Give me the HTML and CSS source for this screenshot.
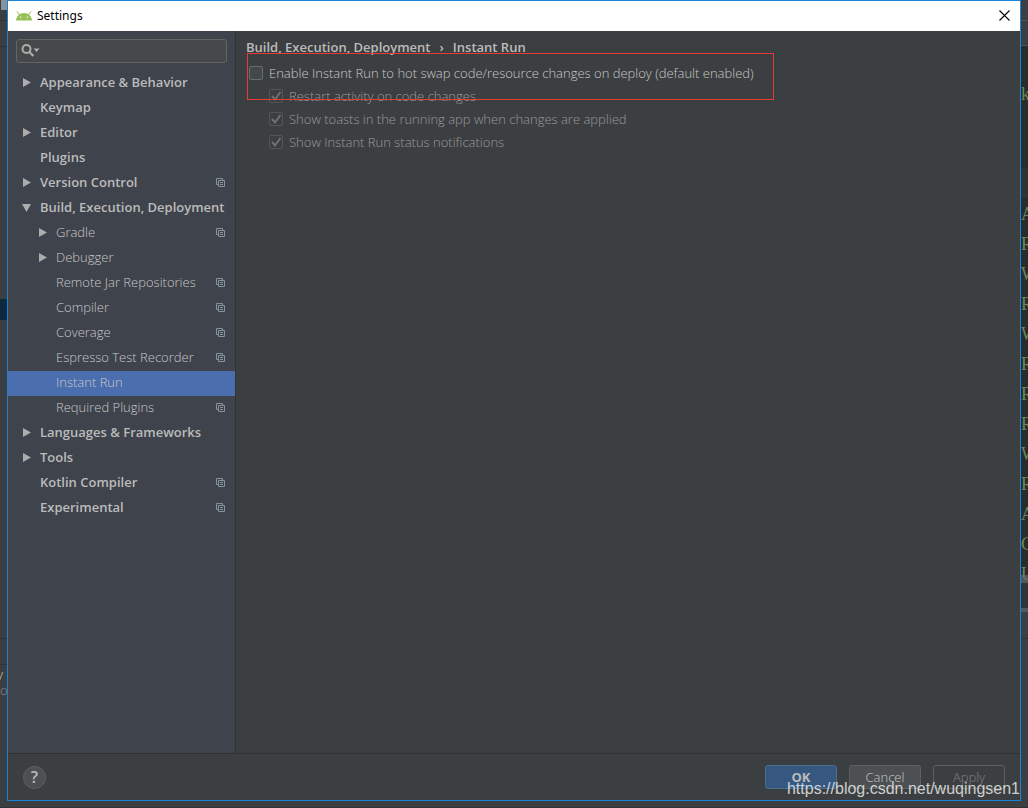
FILE: index.html
```html
<!DOCTYPE html>
<html lang="en">
<head>
  <meta charset="UTF-8" />
  <meta name="viewport" content="width=device-width, initial-scale=1.0" />
  <title>Settings</title>
  <link rel="stylesheet" href="styles.css">
</head>
<body>
  <svg class="sprite" aria-hidden="true">
    <symbol id="right" viewBox="0 0 9 9"><path d="M1 0 L9 4.5 L1 9 Z" fill="#adadad"/></symbol>
    <symbol id="down" viewBox="0 0 9 9"><path d="M0 1 H9 L4.5 9 Z" fill="#adadad"/></symbol>
    <symbol id="copy" viewBox="0 0 9 9">
      <path d="M2 6.5 H0.5 V0.5 H6.5 V2" fill="none" stroke="#87939a"/>
      <path d="M2.5 2.5 H8.5 V8.5 H2.5 Z M4 4.5 H7 M4 6.5 H7" fill="none" stroke="#87939a"/>
    </symbol>
  </svg>

  <div class="ide">
    <div class="strip left">
      <div class="tab"></div>
      <div class="toolbar"></div>
      <div class="navbar"></div>
      <div class="project"></div>
      <div class="selected"></div>
      <div class="project-rest"></div>
      <div class="status"></div>
      <div class="log"><span class="light">y</span><span>o</span></div>
    </div>

    <main class="dialog">
      <header class="titlebar">
        <svg width="16" height="10" viewBox="0 0 16 10">
          <path d="M0 9.5 C0.3 5 3.6 2 8 2 C12.4 2 15.7 5 16 9.5 Z" fill="#97c257"/>
          <path d="M1 0.4 L3.6 4 M15 0.4 L12.4 4" stroke="#97c257" stroke-width="1"/>
          <circle cx="4.5" cy="6.2" r="0.7" fill="#fff"/>
          <circle cx="11.5" cy="6.2" r="0.7" fill="#fff"/>
        </svg>
        <h1>Settings</h1>
        <button class="close" aria-label="Close">
          <svg width="11" height="11" viewBox="0 0 11 11"><path d="M0.5 0.5 L10.5 10.5 M10.5 0.5 L0.5 10.5" stroke="#000" stroke-width="1.1"/></svg>
        </button>
      </header>

      <div class="body">
        <aside class="sidebar">
          <label class="search">
            <svg width="19" height="13" viewBox="0 0 19 13">
              <circle cx="5.5" cy="5" r="4" fill="none" stroke="#adadad" stroke-width="2"/>
              <path d="M8.2 7.8 L12.4 12" stroke="#adadad" stroke-width="2.2"/>
              <path d="M12.5 4.5 H18.5 L15.5 8 Z" fill="#adadad"/>
            </svg>
            <input type="text" aria-label="Search settings">
          </label>
          <nav>
            <ul class="tree">
              <li><a href="#"><svg class="arrow"><use href="#right"/></svg><span>Appearance &amp; Behavior</span></a></li>
              <li><a href="#"><i class="arrow"></i><span>Keymap</span></a></li>
              <li><a href="#"><svg class="arrow"><use href="#right"/></svg><span>Editor</span></a></li>
              <li><a href="#"><i class="arrow"></i><span>Plugins</span></a></li>
              <li><a href="#"><svg class="arrow"><use href="#right"/></svg><span>Version Control</span><svg class="copy"><use href="#copy"/></svg></a></li>
              <li>
                <a href="#"><svg class="arrow"><use href="#down"/></svg><span>Build, Execution, Deployment</span></a>
                <ul class="sub">
                  <li><a href="#"><svg class="arrow"><use href="#right"/></svg><span>Gradle</span><svg class="copy"><use href="#copy"/></svg></a></li>
                  <li><a href="#"><svg class="arrow"><use href="#right"/></svg><span>Debugger</span></a></li>
                  <li><a href="#"><i class="arrow"></i><span>Remote Jar Repositories</span><svg class="copy"><use href="#copy"/></svg></a></li>
                  <li><a href="#"><i class="arrow"></i><span>Compiler</span><svg class="copy"><use href="#copy"/></svg></a></li>
                  <li><a href="#"><i class="arrow"></i><span>Coverage</span><svg class="copy"><use href="#copy"/></svg></a></li>
                  <li><a href="#"><i class="arrow"></i><span>Espresso Test Recorder</span><svg class="copy"><use href="#copy"/></svg></a></li>
                  <li><a href="#" class="active"><i class="arrow"></i><span>Instant Run</span></a></li>
                  <li><a href="#"><i class="arrow"></i><span>Required Plugins</span><svg class="copy"><use href="#copy"/></svg></a></li>
                </ul>
              </li>
              <li><a href="#"><svg class="arrow"><use href="#right"/></svg><span>Languages &amp; Frameworks</span></a></li>
              <li><a href="#"><svg class="arrow"><use href="#right"/></svg><span>Tools</span></a></li>
              <li><a href="#"><i class="arrow"></i><span>Kotlin Compiler</span><svg class="copy"><use href="#copy"/></svg></a></li>
              <li><a href="#"><i class="arrow"></i><span>Experimental</span><svg class="copy"><use href="#copy"/></svg></a></li>
            </ul>
          </nav>
        </aside>

        <section class="content">
          <h2><span>Build, Execution, Deployment</span><span>›</span><span>Instant Run</span></h2>
          <div class="options">
            <label class="option"><input type="checkbox"><span>Enable Instant Run to hot swap code/resource changes on deploy (default enabled)</span></label>
            <label class="option child"><input type="checkbox" checked disabled><span>Restart activity on code changes</span></label>
            <label class="option child"><input type="checkbox" checked disabled><span>Show toasts in the running app when changes are applied</span></label>
            <label class="option child"><input type="checkbox" checked disabled><span>Show Instant Run status notifications</span></label>
            <div class="marker"></div>
          </div>
        </section>
      </div>

      <footer class="footer">
        <button class="help" aria-label="Help">?</button>
        <button class="btn primary">OK</button>
        <button class="btn">Cancel</button>
        <button class="btn" disabled>Apply</button>
        <div class="watermark">https://blog.csdn.net/wuqingsen1</div>
      </footer>
    </main>

    <div class="strip right">
      <div class="toolbar"></div>
      <div class="navbar"></div>
      <div class="code">
        <div>k</div>
        <div></div>
        <div></div>
        <div class="current"></div>
        <div>A</div>
        <div>R</div>
        <div>W</div>
        <div>R</div>
        <div>W</div>
        <div>R</div>
        <div>R</div>
        <div>R</div>
        <div>W</div>
        <div>R</div>
        <div>A</div>
        <div>G</div>
        <div class="last">U</div>
      </div>
      <div class="scroll"></div>
      <div class="crumbs"></div>
      <div class="pane"></div>
      <div class="status"></div>
    </div>
  </div>
</body>
</html>
```
FILE: styles.css
```css
* {
  box-sizing: border-box;
}
body {
  margin: 0;
  font-family: "Open Sans", "Noto Sans", sans-serif;
  font-size: 13px;
  font-weight: 300;
  line-height: 18px;
  color: #c8c8c8;
  background: #3c3f41;
}
ul {
  list-style: none;
  margin: 0;
  padding: 0;
}
button {
  font: inherit;
}
.sprite {
  display: none;
}
.ide {
  display: grid;
  grid-template-columns: 7px minmax(0, 1fr) 7px;
  min-height: 100vh;
  border-bottom: 1px solid #323232;
}

/* editor behind the dialog */
.strip {
  display: flex;
  flex-direction: column;
  overflow: hidden;
}
.toolbar {
  height: 21px;
  border-bottom: 1px solid #515151;
}
.navbar {
  height: 25px;
  border-bottom: 1px solid #515151;
}
.left .tab {
  height: 10px;
  margin-left: 1px;
  background: #87939a;
}
.left .toolbar {
  height: 11px;
  border-color: #303234;
}
.left .navbar {
  height: 26px;
  border-color: #303234;
}
.project {
  height: 252px;
}
.selected {
  height: 21px;
  background: #0d293e;
}
.project-rest {
  height: 319px;
  border-bottom: 1px solid #303234;
}
.left .status {
  height: 26px;
  border-bottom: 1px solid #303234;
}
.log {
  display: flex;
  flex-direction: column;
  line-height: 16px;
  padding-top: 1px;
  color: #8c8c8c;
}
.log .light {
  color: #c8c8c8;
  align-self: flex-end;
  margin-right: 4px;
}
.code {
  padding-top: 32px;
  background: #2b2b2b;
  color: #6a8759;
  font-family: "Liberation Serif", "Times New Roman", serif;
  font-size: 18px;
  line-height: 32px;
}
.code div {
  height: 30px;
}
.code .current {
  background: #323232;
}
.code .last {
  height: 17px;
}
.scroll {
  height: 8px;
  background: rgba(110, 110, 110, 0.5);
}
.crumbs {
  height: 25px;
  background: #313335;
}
.pane {
  height: 31px;
  border-top: 4px solid #54585a;
  border-bottom: 1px solid #303234;
}

.dialog {
  display: flex;
  flex-direction: column;
  margin-bottom: 6px;
  border: 1px solid #1883d7;
  background: #3c3f41;
}
.titlebar {
  display: flex;
  align-items: center;
  gap: 5px;
  height: 30px;
  padding: 0 8px;
  background: #fff;
  color: #000;
}
.titlebar h1 {
  margin: 0;
  padding-bottom: 1px;
  font-family: "Noto Sans", sans-serif;
  font-size: 12px;
  font-weight: normal;
}
.titlebar svg {
  display: block;
}
.close {
  margin-left: auto;
  padding: 0 2px 2px;
  border: none;
  background: none;
}
.body {
  display: flex;
  flex: 1;
}
.sidebar {
  width: 228px;
  border-right: 1px solid #323436;
  background: #3f434c;
}
.search {
  display: flex;
  align-items: center;
  height: 24px;
  margin: 8px;
  padding: 0 0 2px 4px;
  border: 1px solid #646464;
  border-radius: 3px;
  background: #45494a;
}
.search input {
  flex: 1;
  min-width: 0;
  border: none;
  outline: none;
  background: none;
  color: #bbbbbb;
}
.tree a {
  display: flex;
  align-items: center;
  height: 25px;
  padding: 0 10px 2px 14px;
  color: #bbbbbb;
  font-weight: 600;
  text-decoration: none;
  white-space: nowrap;
}
.tree span {
  padding-bottom: 1px;
}
.tree .sub a {
  padding-left: 30px;
  color: #c8c8c8;
  font-weight: 300;
}
.tree .sub .active {
  background: #4b6eaf;
}
.arrow {
  flex: none;
  width: 9px;
  height: 9px;
  margin-right: 9px;
}
.copy {
  flex: none;
  width: 9px;
  height: 9px;
  margin-left: auto;
}

.content {
  flex: 1;
  padding: 7px 10px;
}
.content h2 {
  display: flex;
  gap: 9px;
  margin: 0;
  color: #bbbbbb;
  font-size: 13px;
  font-weight: 600;
}
.options {
  position: relative;
  padding: 5px 3px;
}
.option {
  display: flex;
  align-items: center;
  gap: 6px;
  height: 23px;
}
.child {
  padding-left: 20px;
  color: #999999;
}
.option input {
  appearance: none;
  width: 14px;
  height: 14px;
  margin: 0;
  border: 1px solid #6b6b6b;
  border-radius: 2px;
  background: #43494a;
}
.option input:disabled {
  border-color: #545556;
  background: #3c3f41;
}
.option input:checked {
  background-image: url("data:image/svg+xml,%3Csvg xmlns='http://www.w3.org/2000/svg' viewBox='0 0 12 12'%3E%3Cpath d='M2 6 L5 9.5 L10.5 2' fill='none' stroke='%23707070' stroke-width='2'/%3E%3C/svg%3E");
}
/* red frame round the first option */
.marker {
  position: absolute;
  top: -3px;
  left: 1px;
  width: 527px;
  height: 47px;
  border: 1px solid #e53c36;
  pointer-events: none;
}

.footer {
  position: relative;
  display: flex;
  align-items: center;
  gap: 12px;
  height: 47px;
  padding: 0 15px;
  border-top: 1px solid #323232;
}
.help {
  width: 23px;
  height: 23px;
  margin-right: auto;
  padding: 0;
  border: 1px solid #5e6060;
  border-radius: 50%;
  background: #4c5052;
  color: #bbbbbb;
  font-size: 16px;
  font-weight: 600;
  line-height: 20px;
}
.btn {
  width: 72px;
  height: 24px;
  padding: 0;
  border: 1px solid #5e6060;
  border-radius: 3px;
  background: #4c5052;
  color: #c8c8c8;
}
.btn.primary {
  border-color: #4c708c;
  background: #365880;
  color: #bbbbbb;
  font-weight: bold;
}
.btn:disabled {
  background: none;
  color: #808080;
}
.watermark {
  position: absolute;
  right: 0;
  bottom: 2px;
  color: rgba(255, 255, 255, 0.75);
  font-family: "Liberation Sans", Arial, sans-serif;
  font-size: 16px;
  font-weight: normal;
  line-height: 18px;
}
```
